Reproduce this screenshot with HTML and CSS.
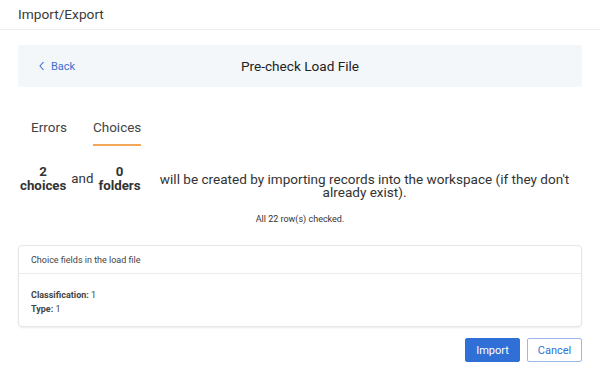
FILE: index.html
```html
<!DOCTYPE html>
<html>
<head>
<meta charset="utf-8">
<link rel="stylesheet" href="styles.css">
</head>
<body>
<header class="top">Import/Export</header>
<main class="content">
  <div class="banner">
    <a class="back">
      <svg width="8" height="10" viewBox="0 0 8 10"><path d="M5.5 1 L2 5 L5.5 9" fill="none" stroke="#3d6fce" stroke-width="1.1"/></svg>
      <span>Back</span>
    </a>
    <div class="title">Pre-check Load File</div>
  </div>
  <nav class="tabs">
    <span class="tab">Errors</span>
    <span class="tab active">Choices</span>
  </nav>
  <div class="summary">
    <div class="count"><b>2</b><b>choices</b></div>
    <span class="and">and</span>
    <div class="count"><b>0</b><b>folders</b></div>
    <p class="desc">will be created by importing records into the workspace (if they don't already exist).</p>
  </div>
  <div class="checked">All 22 row(s) checked.</div>
  <section class="card">
    <div class="card-head">Choice fields in the load file</div>
    <div class="card-body">
      <div><b>Classification:</b> 1</div>
      <div><b>Type:</b> 1</div>
    </div>
  </section>
  <div class="actions">
    <button class="btn primary">Import</button>
    <button class="btn secondary">Cancel</button>
  </div>
</main>
</body>
</html>
```
FILE: styles.css
```css
* { box-sizing: border-box; }
body {
  margin: 0;
  font-family: Roboto, "Liberation Sans", sans-serif;
  color: #333;
  background: #fff;
}
.top {
  height: 30px;
  padding: 6px 18px 0;
  font-size: 13.7px;
  color: #3a3a3a;
  border-bottom: 1px solid #ececec;
}
.content {
  padding: 0 18px;
}
.banner {
  margin-top: 15px;
  height: 42px;
  background: #f4f7fa;
  border-radius: 2px;
  display: flex;
  align-items: center;
  position: relative;
  padding-left: 20px;
}
.back {
  display: flex;
  align-items: center;
  gap: 5px;
  color: #3d6fce;
  font-size: 11px;
}
.title {
  position: absolute;
  left: 0;
  right: 0;
  text-align: center;
  font-size: 13.6px;
  color: #222;
  pointer-events: none;
}
.tabs {
  display: flex;
  gap: 26px;
  margin-top: 32px;
  padding-left: 13px;
}
.tab {
  font-size: 13.5px;
  color: #444;
  padding-bottom: 9px;
  border-bottom: 2px solid transparent;
}
.tab.active {
  border-bottom-color: #f2a65a;
}
.summary {
  display: flex;
  align-items: flex-start;
  margin-top: 19px;
  padding-left: 2px;
}
.count {
  display: flex;
  flex-direction: column;
  align-items: center;
  font-size: 13.3px;
  line-height: 14px;
  color: #333;
}
.and {
  font-size: 13.3px;
  line-height: 14px;
  margin: 7px 5px 0;
  color: #333;
}
.desc {
  margin: 8px 0 0 16px;
  font-size: 13.55px;
  line-height: 13px;
  text-align: center;
  color: #333;
  width: 416px;
}
.checked {
  text-align: center;
  font-size: 9px;
  margin-top: 15px;
  color: #333;
}
.card {
  margin-top: 21px;
  border: 1px solid #e6e6e6;
  border-radius: 4px;
  box-shadow: 0 1px 2px rgba(0,0,0,0.08);
  font-size: 9px;
}
.card-head {
  height: 28px;
  padding: 0 12px;
  display: flex;
  align-items: center;
  border-bottom: 1px solid #ececec;
  color: #444;
}
.card-body {
  padding: 14px 12px 10px;
  line-height: 14px;
  color: #444;
}
.actions {
  display: flex;
  justify-content: flex-end;
  gap: 7px;
  margin-top: 11px;
}
.btn {
  width: 55px;
  height: 24px;
  font-family: Roboto, "Liberation Sans", sans-serif;
  font-size: 11px;
  border-radius: 2px;
  cursor: pointer;
}
.primary {
  background: #2f6fd6;
  border: 1px solid #2f6fd6;
  color: #fff;
}
.secondary {
  background: #fff;
  border: 1px solid #9bb8e6;
  color: #2f6fd6;
}
```
